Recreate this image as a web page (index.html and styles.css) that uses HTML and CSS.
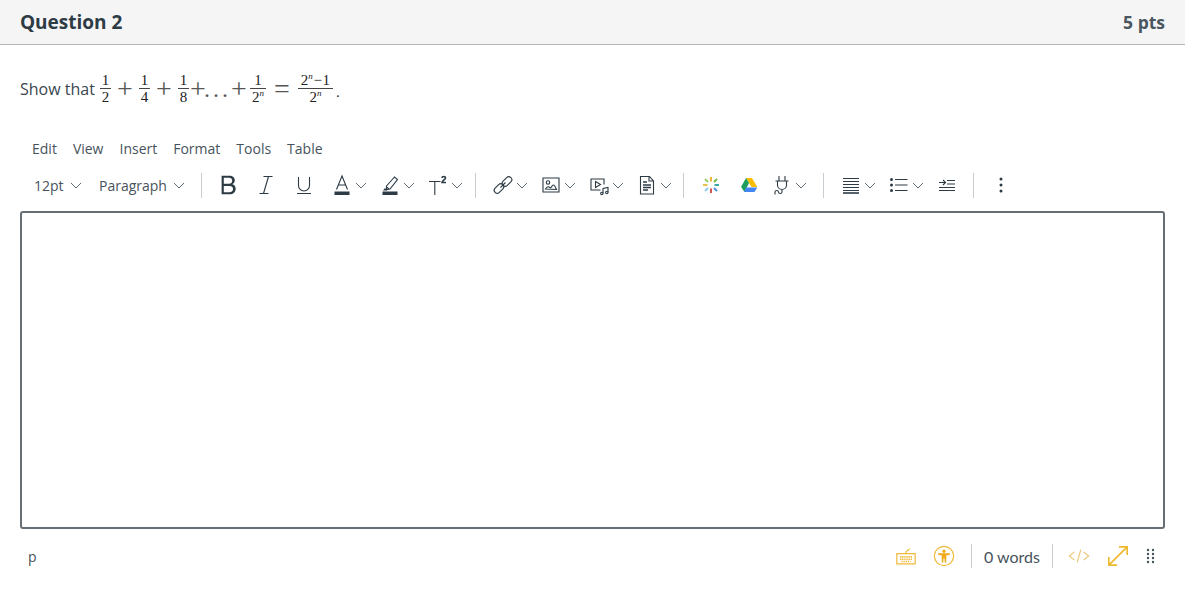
FILE: index.html
```html
<!DOCTYPE html>
<html lang="en">

<head>
  <meta charset="UTF-8">
  <meta name="viewport" content="width=device-width, initial-scale=1.0">
  <title>Question 2</title>
  <link rel="stylesheet" href="styles.css">
</head>

<body>
  <div class="question">
    <header class="question_header">
      <h2 class="question_title">Question 2</h2>
      <span class="question_points">5 pts</span>
    </header>

    <div class="question_body">
      <p class="question_text">
        <span>Show that</span>
        <span class="math">
          <span class="frac frac-1"><span class="frac_top">1</span><span class="frac_bottom">2</span></span>
          <span class="op op-1">+</span>
          <span class="frac frac-1"><span class="frac_top">1</span><span class="frac_bottom">4</span></span>
          <span class="op op-1">+</span>
          <span class="frac frac-1"><span class="frac_top">1</span><span class="frac_bottom">8</span></span>
          <span class="op op-2">+</span>
          <span class="dots">...</span>
          <span class="op op-3">+</span>
          <span class="frac frac-2"><span class="frac_top">1</span><span class="frac_bottom">2<sup>n</sup></span></span>
          <span class="op op-4">=</span>
          <span class="frac frac-3"><span class="frac_top">2<sup>n</sup> &minus; 1</span><span class="frac_bottom">2<sup>n</sup></span></span>
          <span class="period">.</span>
        </span>
      </p>

      <nav class="menubar">
        <span>Edit</span>
        <span>View</span>
        <span>Insert</span>
        <span>Format</span>
        <span>Tools</span>
        <span>Table</span>
      </nav>

      <div class="toolbar">
        <span class="select select-size">12pt<svg class="chev" viewBox="0 0 12 7"><path d="M1 1l5 5 5-5"/></svg></span>
        <span class="select select-block">Paragraph<svg class="chev" viewBox="0 0 12 7"><path d="M1 1l5 5 5-5"/></svg></span>
        <i class="sep sep-1"></i>

        <span class="btn"><svg class="icon" viewBox="0 0 24 24"><path class="solid" transform="translate(-1 -1.200) scale(1.100)" d="M6 3.500h7c3.200 0 5 1.700 5 4.200 0 1.700-.9 3-2.300 3.600 1.900.5 3.100 2 3.100 4.100 0 3-2.200 5.100-5.600 5.100H6zm2 2v5.400h4.700c1.900 0 2.900-1 2.900-2.700s-1-2.700-2.900-2.700zm0 7.300v5.800h5.100c2.100 0 3.300-1.100 3.300-2.900s-1.200-2.900-3.300-2.900z"/></svg></span>
        <span class="btn"><svg class="icon" viewBox="0 0 24 24"><path d="M9.500 3.500h9M5.500 20.500h9M14.500 3.500l-5 17"/></svg></span>
        <span class="btn"><svg class="icon" viewBox="0 0 24 24"><path d="M6.500 4v8.500a5.500 5.500 0 0 0 11 0V4M5 20.500h14"/></svg></span>

        <span class="split split-first"><svg class="icon" viewBox="0 0 24 24"><path d="M6.500 16.500L12 3l5.500 13.500M8.300 12h7.400"/><path class="solid" d="M4.500 18.500h15V22h-15z"/></svg><svg class="chev" viewBox="0 0 12 7"><path d="M1 1l5 5 5-5"/></svg></span>
        <span class="split"><svg class="icon" viewBox="0 0 24 24"><path d="M8.500 13l8-9 3 2.500-7.500 9.500-3.500.5zM8 13.500l3.500 3"/><path class="solid" d="M7 15l2.500 2.500H5zM4.500 18.500h15V22h-15z"/></svg><svg class="chev" viewBox="0 0 12 7"><path d="M1 1l5 5 5-5"/></svg></span>
        <span class="split"><svg class="icon" viewBox="0 0 24 24"><path d="M3 8.500h11.500M8.800 8.500V22"/><path class="thick" d="M16 5c0-2 3.500-2 3.500 0 0 1.500-3.500 2.500-3.500 4.500h4"/></svg><svg class="chev" viewBox="0 0 12 7"><path d="M1 1l5 5 5-5"/></svg></span>
        <i class="sep sep-2"></i>

        <span class="split"><svg class="icon" viewBox="0 0 24 24"><rect x="2.500" y="12.500" width="11" height="6" rx="3" transform="rotate(-45 8 15.500)"/><rect x="10.500" y="5.500" width="11" height="6" rx="3" transform="rotate(-45 16 8.500)"/><path d="M9.500 14.500l5-5"/></svg><svg class="chev" viewBox="0 0 12 7"><path d="M1 1l5 5 5-5"/></svg></span>
        <span class="split"><svg class="icon" viewBox="0 0 24 24"><path d="M4 5h16v14H4z"/><circle cx="9" cy="9.500" r="1.700"/><path d="M6.500 16c2-3 3-2.500 4.500-1.500s2-3 3.500-2.500 2 2 3 4.500z"/></svg><svg class="chev" viewBox="0 0 12 7"><path d="M1 1l5 5 5-5"/></svg></span>
        <span class="split"><svg class="icon" viewBox="0 0 24 24"><path d="M13.500 17H4V6h13v5.500"/><path d="M8.500 8.500v6l5-3zM16 20.500v-5l5-1v5"/><circle cx="14.800" cy="20.500" r="1.200"/><circle cx="19.800" cy="19.500" r="1.200"/></svg><svg class="chev" viewBox="0 0 12 7"><path d="M1 1l5 5 5-5"/></svg></span>
        <span class="split"><svg class="icon" viewBox="0 0 24 24"><path d="M5.500 3.500h9l4 4.500v13h-13zM14 3.500V8h4.500"/><path class="thick" d="M8 9h4M8 12h8M8 14.500h8M8 17h5"/></svg><svg class="chev" viewBox="0 0 12 7"><path d="M1 1l5 5 5-5"/></svg></span>
        <i class="sep sep-3"></i>

        <span class="btn"><svg class="icon icon-colored" viewBox="0 0 24 24">
            <path stroke="#f3b23c" d="M12 4v4.500"/><path stroke="#6cc04a" d="M18 6l-3 3"/><path stroke="#3aa6a6" d="M20 12h-4.500"/><path stroke="#4b8fd8" d="M18 18l-3-3"/><path stroke="#d9534f" d="M12 20v-4.500"/><path stroke="#8fc7e8" d="M6 18l3-3"/><path stroke="#e8c14a" d="M4 12h4.500"/><path stroke="#9bcf6a" d="M6 6l3 3"/>
          </svg></span>
        <span class="btn"><svg class="icon icon-drive" viewBox="0 0 24 24">
            <path fill="#fbbc04" d="M8.500 3.500h7l6.500 11h-7z"/><path fill="#1e9e5a" d="M8.500 3.500l3.500 6-5.500 11L2.500 14z"/><path fill="#4285f4" d="M8.500 15H22l-3.500 5.500H6z"/>
          </svg></span>
        <span class="split split-plug"><svg class="icon" viewBox="0 0 24 24"><path d="M9 3v5M15 3v5M5.500 8h13M7.500 8v4a4.500 4.500 0 0 0 9 0V8M12 16.500V19c0 2-3.500 2-3.500 0s-3.500-2-3.500 0v2.500"/></svg><svg class="chev" viewBox="0 0 12 7"><path d="M1 1l5 5 5-5"/></svg></span>
        <i class="sep sep-4"></i>

        <span class="split"><svg class="icon" viewBox="0 0 24 24"><path d="M4 5.500h16M4 8.500h16M4 11.500h16M4 14.500h16M4 17.500h16"/><path class="thick" d="M4 20h16"/></svg><svg class="chev" viewBox="0 0 12 7"><path d="M1 1l5 5 5-5"/></svg></span>
        <span class="split"><svg class="icon" viewBox="0 0 24 24"><path d="M8 6.500h12.500M8 12h12.500M8 17.500h12.500"/><circle class="solid" cx="4.500" cy="6.500" r="1.500"/><circle class="solid" cx="4.500" cy="12" r="1.500"/><circle class="solid" cx="4.500" cy="17.500" r="1.500"/></svg><svg class="chev" viewBox="0 0 12 7"><path d="M1 1l5 5 5-5"/></svg></span>
        <span class="btn btn-indent"><svg class="icon" viewBox="0 0 24 24"><path d="M12 7.500h8M12 11h8M4 14.500h16M4 17.500h16M4 9.500h6M8 7l2.500 2.500L8 12"/></svg></span>
        <i class="sep sep-5"></i>

        <span class="btn"><svg class="icon" viewBox="0 0 24 24"><circle class="solid" cx="12" cy="6" r="1.500"/><circle class="solid" cx="12" cy="12" r="1.500"/><circle class="solid" cx="12" cy="18" r="1.500"/></svg></span>
      </div>

      <div class="editor"></div>

      <footer class="statusbar">
        <span class="statusbar_path">p</span>
        <div class="statusbar_right">
          <svg class="status-icon" viewBox="0 0 24 24"><path d="M2 9.500h20v11H2zM12 9.500V7.500c0-1.500 3-1.500 4-3.500"/><path class="dash" d="M5.500 13h13M5.500 15.500h13M7 18h10"/></svg>
          <svg class="status-icon status-icon-a11y" viewBox="0 0 24 24"><circle cx="12" cy="12" r="10.500"/><circle class="fill" cx="12" cy="6.800" r="1.800"/><path class="fill" d="M5.500 9h13v1.600l-4 .9V19h-1.800v-4h-1.400v4H9.500v-7.500l-4-.9z"/></svg>
          <i class="status-sep status-sep-1"></i>
          <span class="statusbar_words">0 words</span>
          <i class="status-sep status-sep-2"></i>
          <svg class="status-icon status-icon-code" viewBox="0 0 24 24"><path d="M7 7.500L1.500 12 7 16.500M17 7.500l5.500 4.500-5.500 4.500M14 5l-4 14"/></svg>
          <svg class="status-icon status-icon-expand" viewBox="0 0 24 24"><path d="M2 22L22 2M13 2h9v9M2 13v9h9"/></svg>
          <svg class="resize" viewBox="0 0 10 16">
            <circle cx="2" cy="2" r="1.200"/><circle cx="7" cy="2" r="1.200"/>
            <circle cx="2" cy="6" r="1.200"/><circle cx="7" cy="6" r="1.200"/>
            <circle cx="2" cy="10" r="1.200"/><circle cx="7" cy="10" r="1.200"/>
            <circle cx="2" cy="14" r="1.200"/><circle cx="7" cy="14" r="1.200"/>
          </svg>
        </div>
      </footer>
    </div>
  </div>
</body>

</html>
```

FILE: styles.css
```css
* {
  box-sizing: border-box;
  padding: 0;
  margin: 0;
}

html {
  font-family: 'Open Sans', sans-serif;
  color: #2d3b45;
}

body {
  background-color: #ffffff;
  overflow: hidden;
}

.question {
  width: 1185px;
  height: 604px;
}

.question_header {
  display: flex;
  justify-content: space-between;
  align-items: center;
  height: 45px;
  padding: 0 20px;
  background-color: #f5f5f5;
  border-bottom: 1px solid #b5b8ba;
}

.question_title {
  font-size: 19px;
  font-weight: 700;
}

.question_points {
  font-size: 17.5px;
  font-weight: 700;
  color: #4a5660;
}

.question_body {
  padding: 0 20px;
}

.question_text {
  display: flex;
  align-items: center;
  height: 36px;
  margin-top: 26px;
  font-size: 16px;
  color: #3a464f;
}

.math {
  display: flex;
  align-items: center;
  margin-left: 5px;
  font-family: 'Liberation Serif', serif;
  color: #222222;
}

.frac {
  display: flex;
  flex-direction: column;
  align-items: center;
  font-size: 15px;
  line-height: 15px;
}

.frac sup {
  font-size: 9px;
  line-height: 0;
  font-style: italic;
}

.frac_top {
  width: 100%;
  text-align: center;
  border-bottom: 1px solid #444444;
  white-space: nowrap;
}

.frac_bottom {
  padding-top: 1px;
  white-space: nowrap;
}

.frac-1 { width: 11px; }
.frac-2 { width: 16px; }
.frac-3 { width: 35px; }

.frac-3 .frac_top {
  word-spacing: -3px;
}

.op {
  display: block;
  font-size: 28px;
  line-height: 24px;
  text-align: center;
  color: #555555;
}

.op-1 { width: 28px; }
.op-2 { width: 18px; }
.op-3 { width: 22px; }
.op-4 { width: 32px; }

.dots {
  width: 24px;
  margin-left: -3px;
  font-size: 24px;
  line-height: 24px;
  letter-spacing: 3px;
  white-space: nowrap;
  color: #555555;
}

.period {
  margin: 6px 0 0 3px;
  font-size: 15px;
}

.menubar {
  display: flex;
  gap: 16px;
  height: 20px;
  margin-top: 32px;
  padding-left: 12px;
  font-size: 14px;
  line-height: 20px;
  color: #47535c;
}

.toolbar {
  display: flex;
  align-items: center;
  height: 38px;
  margin-top: 7px;
}

.select {
  display: flex;
  align-items: center;
  font-size: 14px;
  color: #47535c;
}

.select-size {
  width: 79px;
  padding-left: 14px;
}

.select-block {
  width: 102px;
}

.select .chev {
  margin-left: 6px;
}

.chev {
  flex: none;
  width: 12px;
  height: 7px;
  fill: none;
  stroke: #5f6b75;
  stroke-width: 1;
}

.sep {
  flex: none;
  width: 1px;
  height: 25px;
  background-color: #c7cdd1;
}

.sep-1 { margin-right: 7px; }
.sep-2 { margin: 0 15px 0 1px; }
.sep-3 { margin: 0 8px 0 0; }
.sep-4 { margin: 0 15px 0 5px; }
.sep-5 { margin: 0 8px 0 7px; }

.btn {
  display: flex;
  justify-content: center;
  flex: none;
  width: 38px;
}

.btn-indent {
  margin-left: -7px;
}

.split {
  display: flex;
  align-items: center;
  flex: none;
  width: 48px;
}

.split-first {
  margin-left: 7px;
}

.split-plug {
  margin-left: 2px;
}

.split .chev {
  margin-left: 1px;
}

.icon {
  flex: none;
  width: 24px;
  height: 24px;
  fill: none;
  stroke: #2d3b45;
  stroke-width: 1.100;
}

.icon .solid {
  fill: #2d3b45;
  stroke: none;
}

.icon .thick {
  stroke-width: 1.600;
}

.icon-colored path {
  stroke-width: 2;
}

.icon-drive {
  width: 20px;
  height: 20px;
  stroke: none;
}

.editor {
  height: 318px;
  margin-top: 7px;
  background-color: #ffffff;
  border: 2px solid #666f75;
  border-radius: 3px;
}

.statusbar {
  display: flex;
  justify-content: space-between;
  align-items: center;
  height: 54px;
}

.statusbar_path {
  margin-left: 8px;
  font-size: 14px;
  color: #47535c;
}

.statusbar_right {
  display: flex;
  align-items: center;
  padding-right: 9px;
}

.status-icon {
  flex: none;
  width: 22px;
  height: 22px;
  margin-right: 16px;
  fill: none;
  stroke: #efb93a;
  stroke-width: 1.300;
}

.status-icon .dash {
  stroke-dasharray: 1.500 .8;
  stroke-width: 1.800;
}

.status-icon-a11y .fill {
  fill: #f0ac1c;
  stroke: none;
}

.status-icon-code {
  margin-right: 17px;
  stroke: #ebc878;
}

.status-icon-expand {
  margin-right: 0;
  stroke: #efb92f;
  stroke-width: 1.800;
}

.status-sep {
  flex: none;
  width: 1px;
  height: 24px;
  background-color: #c7cdd1;
}

.status-sep-1 {
  margin: 0 12px 0 0;
}

.status-sep-2 {
  margin: 0 15px 0 12px;
}

.statusbar_words {
  font-family: Lato, sans-serif;
  font-size: 16px;
  color: #47535c;
}

.resize {
  flex: none;
  width: 10px;
  height: 16px;
  margin-left: 17px;
  fill: #47535c;
}
```
